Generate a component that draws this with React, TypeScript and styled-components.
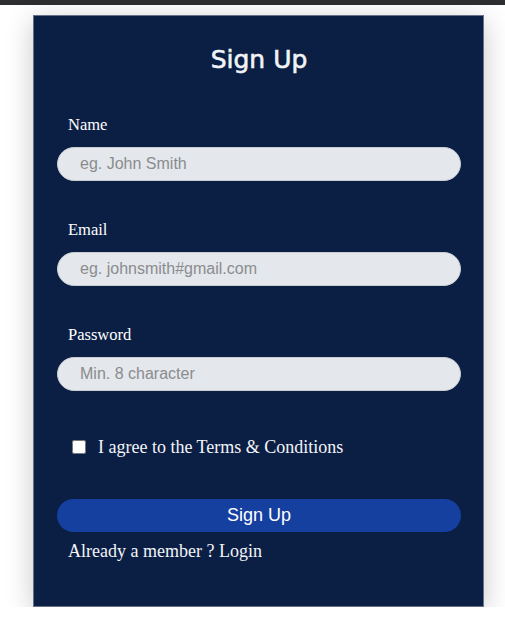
import React from "react";
import styled, { createGlobalStyle } from "styled-components";

const GlobalStyle = createGlobalStyle`
  html, body { margin: 0; padding: 0; background: #ffffff; }
  body { font-family: "Liberation Serif", "Times New Roman", serif; }
`;

const TopBar = styled.div`
  height: 5px;
  background: #2c2e30;
`;

const Card = styled.form`
  box-sizing: border-box;
  width: 451px;
  height: 592px;
  margin: 10px 0 0 33px;
  padding: 29px 22px 0 23px;
  background: #0b1f45;
  border: 1px solid #66718a;
  box-shadow: 0 6px 26px rgba(0, 0, 0, 0.22);
  display: flex;
  flex-direction: column;
`;

const Title = styled.h1`
  margin: 0 0 40px;
  font-family: "Comic Sans MS", "DejaVu Sans", sans-serif;
  font-weight: 400;
  font-size: 25px;
  line-height: 30px;
  color: #f1f3f7;
  text-align: center;
  -webkit-text-stroke: 0.6px #f1f3f7;
`;

const Field = styled.div<{ $first?: boolean }>`
  display: flex;
  flex-direction: column;
  margin-top: ${(p) => (p.$first ? "0" : "39px")};
`;

const Label = styled.label`
  padding-left: 11px;
  margin-bottom: 12px;
  font-family: "Liberation Serif", "Times New Roman", serif;
  font-size: 16.5px;
  line-height: 20px;
  color: #ffffff;
`;

const Input = styled.input`
  box-sizing: border-box;
  width: 100%;
  height: 34px;
  padding: 0 22px;
  border: 1px solid #c9ccd1;
  border-radius: 17px;
  background: #e4e7eb;
  font-family: "Liberation Sans", Arial, sans-serif;
  font-size: 16px;
  color: #333;
  outline: none;
  &::placeholder { color: #8a8c8f; }
`;

const CheckRow = styled.label`
  display: flex;
  align-items: center;
  margin-top: 45px;
  padding-left: 15px;
  font-family: "Liberation Serif", "Times New Roman", serif;
  font-size: 18px;
  line-height: 22px;
  color: #f3f4f7;
`;

const Check = styled.input`
  width: 14px;
  height: 14px;
  margin: 0 12px 0 0;
`;

const SubmitButton = styled.button`
  margin-top: 41px;
  height: 33px;
  width: 100%;
  border: none;
  border-radius: 17px;
  background: #1540a0;
  color: #ffffff;
  font-family: "Liberation Sans", Arial, sans-serif;
  font-size: 18px;
  cursor: pointer;
`;

const Footer = styled.p`
  margin: 8px 0 0;
  padding-left: 11px;
  font-family: "Liberation Serif", "Times New Roman", serif;
  font-size: 18px;
  line-height: 22px;
  color: #f3f4f7;
`;

export default function App() {
  return (
    <>
      <GlobalStyle />
      <TopBar />
      <Card onSubmit={(e) => e.preventDefault()}>
        <Title>Sign Up</Title>
        <Field $first>
          <Label>Name</Label>
          <Input type="text" placeholder="eg. John Smith" />
        </Field>
        <Field>
          <Label>Email</Label>
          <Input type="email" placeholder="eg. johnsmith#gmail.com" />
        </Field>
        <Field>
          <Label>Password</Label>
          <Input type="password" placeholder="Min. 8 character" />
        </Field>
        <CheckRow>
          <Check type="checkbox" />
          I agree to the Terms &amp; Conditions
        </CheckRow>
        <SubmitButton type="submit">Sign Up</SubmitButton>
        <Footer>Already a member ? Login</Footer>
      </Card>
    </>
  );
}
